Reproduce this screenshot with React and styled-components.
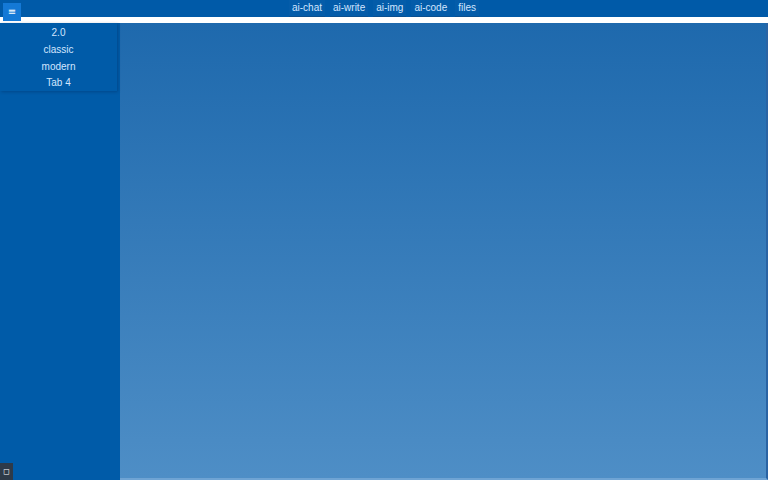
import styled, { createGlobalStyle } from "styled-components";

const GlobalStyle = createGlobalStyle`
    html, body {
        margin: 0;
        padding: 0;
        height: 100%;
        overflow: hidden;
    }
    body {
        font-family: 'Liberation Sans', Arial, sans-serif;
        background-color: #ffffff;
    }
    #root {
        height: 100%;
    }
`

const tabs = ["ai-chat", "ai-write", "ai-img", "ai-code", "files"];
const menu = ["2.0", "classic", "modern", "Tab 4"];

export default function App(){
    return (
        <>
        <GlobalStyle />
        <Page>
            <TopBar>
                <MenuButton>≡</MenuButton>
                <Tabs>
                    {tabs.map((t) => <Tab key={t}>{t}</Tab>)}
                </Tabs>
            </TopBar>
            <Gap />
            <Body>
                <Sidebar>
                    <SideMenu>
                        {menu.map((m) => <SideItem key={m}>{m}</SideItem>)}
                    </SideMenu>
                    <CornerButton>◻</CornerButton>
                </Sidebar>
                <Main />
            </Body>
        </Page>
        </>
    )
}

const Page = styled.div`
    height: 480px;
    display: flex;
    flex-direction: column;
    position: relative;
`
const TopBar = styled.div`
    height: 17px;
    background-color: #005aa8;
    display: flex;
    justify-content: center;
    position: relative;
    flex-shrink: 0;
`
const MenuButton = styled.button`
    position: absolute;
    left: 3px;
    top: 3px;
    width: 18px;
    height: 18px;
    padding: 0;
    border: none;
    background-color: #1479d6;
    color: #ffffff;
    font-family: 'DejaVu Sans', sans-serif;
    font-size: 10px;
    line-height: 18px;
    z-index: 2;
`
const Tabs = styled.div`
    display: flex;
    gap: 5px;
    height: 17px;
`
const Tab = styled.div`
    padding: 0 3px;
    height: 16px;
    border-bottom: 1px solid #0a5090;
    background-color: rgba(255, 255, 255, 0.015);
    color: #d3e6ff;
    font-size: 10px;
    line-height: 16px;
`
const Gap = styled.div`
    height: 6px;
    background-color: #ffffff;
    flex-shrink: 0;
`
const Body = styled.div`
    flex: 1;
    display: flex;
    min-height: 0;
`
const Sidebar = styled.div`
    width: 120px;
    background-color: #005ba8;
    position: relative;
    flex-shrink: 0;
`
const SideMenu = styled.div`
    width: 117px;
    padding-top: 1px;
    display: flex;
    flex-direction: column;
    box-shadow: 1px 1px 3px rgba(0, 30, 70, 0.3);
`
const SideItem = styled.div`
    height: 16.75px;
    text-align: center;
    color: #d3e6ff;
    font-size: 10px;
    line-height: 17px;
`
const CornerButton = styled.div`
    position: absolute;
    left: 0;
    bottom: 0;
    width: 13px;
    height: 17px;
    background-color: #2e3a48;
    color: #ffffff;
    font-family: 'DejaVu Sans', sans-serif;
    font-size: 8px;
    line-height: 17px;
    text-align: center;
`
const Main = styled.div`
    flex: 1;
    background: linear-gradient(to bottom, #1e69ad, #4e8ec6);
    border-right: 2px solid #2a64a4;
    border-bottom: 2px solid #6fa4d4;
`
